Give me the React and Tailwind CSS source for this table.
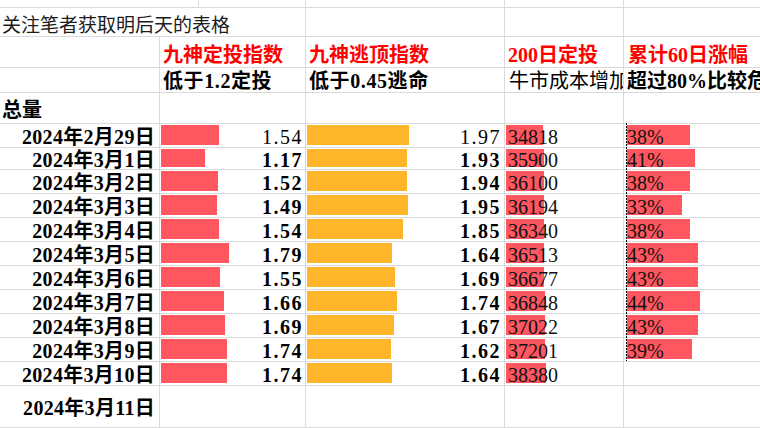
import React from "react";

const rows = [
  { d: "2024年2月29日", b: 1.54, c: 1.97, dv: 34818, e: 38, first: true, h: "h-[24px]" },
  { d: "2024年3月1日", b: 1.17, c: 1.93, dv: 35900, e: 41, h: "h-[22px]" },
  { d: "2024年3月2日", b: 1.52, c: 1.94, dv: 36100, e: 38, h: "h-[24px]" },
  { d: "2024年3月3日", b: 1.49, c: 1.95, dv: 36194, e: 33, h: "h-[24px]" },
  { d: "2024年3月4日", b: 1.54, c: 1.85, dv: 36340, e: 38, h: "h-[24px]" },
  { d: "2024年3月5日", b: 1.79, c: 1.64, dv: 36513, e: 43, h: "h-[24px]" },
  { d: "2024年3月6日", b: 1.55, c: 1.69, dv: 36677, e: 43, h: "h-[24px]" },
  { d: "2024年3月7日", b: 1.66, c: 1.74, dv: 36848, e: 44, h: "h-[24px]" },
  { d: "2024年3月8日", b: 1.69, c: 1.67, dv: 37022, e: 43, h: "h-[24px]" },
  { d: "2024年3月9日", b: 1.74, c: 1.62, dv: 37201, e: 39, h: "h-[24px]" },
  { d: "2024年3月10日", b: 1.74, c: 1.64, dv: 38380, e: null, h: "h-[24px]" },
];

const line = "border-r border-[#dadada]";
const rowB = "flex border-b border-[#dadada]";

function DataRow({ r }) {
  const wb = Math.round(r.b * 37.8);
  const wc = Math.round(r.c * 51.8);
  const wd = Math.round(37 + ((r.dv - 34818) / (38380 - 34818)) * 2.7);
  const we = r.e == null ? 0 : Math.round(r.e * 1.655);
  const wt = r.first ? "font-normal" : "font-bold";
  return (
    <div className={`${rowB} ${r.h}`}>
      <div className={`w-[160px] ${line} flex items-center justify-end pr-[4px] pt-[2px] font-bold whitespace-nowrap tracking-[0.3px]`}>
        {r.d}
      </div>
      <div className={`w-[146px] ${line} grid grid-rows-1`}>
        <div className="col-start-1 row-start-1 ml-px mt-px mb-[2px] bg-[#ff5660]" style={{ width: wb }} />
        <div className={`col-start-1 row-start-1 flex items-center justify-end pr-[2px] pt-[2px] tracking-[1.5px] ${wt}`}>
          {r.b.toFixed(2)}
        </div>
      </div>
      <div className={`w-[199px] ${line} grid grid-rows-1`}>
        <div className="col-start-1 row-start-1 ml-px mt-px mb-[2px] bg-[#ffb52a]" style={{ width: wc }} />
        <div className={`col-start-1 row-start-1 flex items-center justify-end pr-[3px] pt-[2px] tracking-[1.5px] ${wt}`}>
          {r.c.toFixed(2)}
        </div>
      </div>
      <div className={`w-[119px] ${line} grid grid-rows-1`}>
        <div className="col-start-1 row-start-1 ml-px mt-px mb-[2px] bg-[#ff5660]" style={{ width: wd }} />
        <div className="col-start-1 row-start-1 flex items-center pl-[3px] pt-[2px] font-normal text-[#111]">
          {r.dv}
        </div>
      </div>
      <div className="flex-1 grid grid-rows-1">
        {r.e != null && (
          <div className="col-start-1 row-start-1 ml-[3px] mt-px mb-[2px] bg-[#ff5660]" style={{ width: we }} />
        )}
        {r.e != null && (
          <div className="col-start-1 row-start-1 flex items-center pl-[3px] pt-[2px] font-normal text-[#111]">
            {r.e}%
          </div>
        )}
      </div>
    </div>
  );
}

export default function App() {
  return (
    <div className="relative w-[760px] h-[428px] overflow-hidden bg-white text-black text-[20px] leading-[20px] font-['Liberation_Serif','Noto_Sans_CJK_SC',serif]">
      {/* top partial row */}
      <div className={`${rowB} h-[8px]`}>
        <div className={`w-[199px] ${line}`} />
        <div className={`w-[107px] ${line}`} />
        <div className={`w-[199px] ${line}`} />
        <div className={`w-[119px] ${line}`} />
        <div className="flex-1" />
      </div>
      {/* title row */}
      <div className={`${rowB} h-[29px]`}>
        <div className={`w-[306px] ${line} flex items-center pl-[2px] pt-[3px] text-[19px] text-[#1c1c1c] font-['Noto_Sans_CJK_SC',sans-serif] font-normal whitespace-nowrap`}>
          关注笔者获取明后天的表格
        </div>
        <div className={`w-[199px] ${line}`} />
        <div className={`w-[119px] ${line}`} />
        <div className="flex-1" />
      </div>
      {/* header row */}
      <div className={`${rowB} h-[31px] text-[#ff0000] font-bold`}>
        <div className={`w-[160px] ${line}`} />
        <div className={`w-[146px] ${line} flex items-center pl-[3px] pt-[5px] whitespace-nowrap`}>九神定投指数</div>
        <div className={`w-[199px] ${line} flex items-center pl-[3px] pt-[5px] whitespace-nowrap`}>九神逃顶指数</div>
        <div className={`w-[119px] ${line} flex items-center pl-[3px] pt-[5px] whitespace-nowrap overflow-hidden`}>200日定投</div>
        <div className="flex-1 flex items-center pl-[4px] pt-[5px] whitespace-nowrap overflow-hidden">累计60日涨幅</div>
      </div>
      {/* sub header row */}
      <div className={`${rowB} h-[25px] font-bold`}>
        <div className={`w-[160px] ${line}`} />
        <div className={`w-[146px] ${line} flex items-center pl-[3px] pt-[1px] whitespace-nowrap overflow-hidden tracking-[0.6px]`}>低于1.2定投</div>
        <div className={`w-[199px] ${line} flex items-center pl-[3px] pt-[1px] whitespace-nowrap overflow-hidden tracking-[0.6px]`}>低于0.45逃命</div>
        <div className={`w-[119px] ${line} flex items-center pl-[4px] pt-[1px] whitespace-nowrap overflow-hidden font-normal`}>牛市成本增加</div>
        <div className="flex-1 flex items-center pl-[3px] pt-[1px] whitespace-nowrap overflow-hidden">超过80%比较危险</div>
      </div>
      {/* 总量 row */}
      <div className={`${rowB} h-[31px] font-bold`}>
        <div className={`w-[160px] ${line} flex items-center pl-[2px] pt-[3px]`}>总量</div>
        <div className={`w-[146px] ${line}`} />
        <div className={`w-[199px] ${line}`} />
        <div className={`w-[119px] ${line}`} />
        <div className="flex-1" />
      </div>
      {rows.map((r) => (
        <DataRow key={r.d} r={r} />
      ))}
      {/* last row */}
      <div className={`${rowB} h-[42px] font-bold`}>
        <div className={`w-[160px] ${line} flex items-center justify-end pr-[4px] pt-[2px] whitespace-nowrap tracking-[0.3px]`}>2024年3月11日</div>
        <div className={`w-[146px] ${line}`} />
        <div className={`w-[199px] ${line}`} />
        <div className={`w-[119px] ${line}`} />
        <div className="flex-1" />
      </div>
      {/* dashed selection edge */}
      <div className="absolute left-[626px] top-[123px] h-[238px] w-px bg-[repeating-linear-gradient(to_bottom,#000_0_2px,transparent_2px_3px)]" />
    </div>
  );
}
